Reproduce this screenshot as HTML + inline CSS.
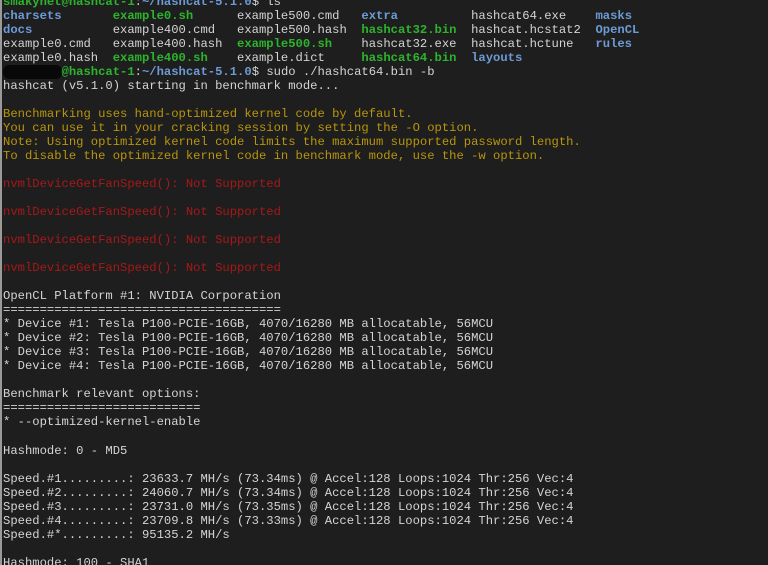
<!DOCTYPE html>
<html><head><meta charset="utf-8"><style>
html,body{margin:0;padding:0;background:#1e1e1e;width:768px;height:565px;overflow:hidden}
body{border-left:2px solid #9a9a9a;box-sizing:border-box;position:relative}
pre{position:absolute;left:1px;top:-5.5px;margin:0;font-family:"Liberation Mono",monospace;font-size:12.2px;line-height:14.03px;color:#d4d4d4;white-space:pre}
.b{color:#6d9bd6;font-weight:bold}.g{color:#2cb52c;font-weight:bold}.y{color:#b8950c}.r{color:#a81818}
.k{color:#050505;background:#080808;border-radius:6px}
</style></head><body><pre><span class="g">smakynet@hashcat-1</span>:<span class="b">~/hashcat-5.1.0</span>$ ls
<span class="b">charsets</span>       <span class="g">example0.sh</span>      example500.cmd   <span class="b">extra</span>          hashcat64.exe    <span class="b">masks</span>
<span class="b">docs</span>           example400.cmd   example500.hash  <span class="g">hashcat32.bin</span>  hashcat.hcstat2  <span class="b">OpenCL</span>
example0.cmd   example400.hash  <span class="g">example500.sh</span>    hashcat32.exe  hashcat.hctune   <span class="b">rules</span>
example0.hash  <span class="g">example400.sh</span>    example.dict     <span class="g">hashcat64.bin</span>  <span class="b">layouts</span>
<span class="k">        </span><span class="g">@hashcat-1</span>:<span class="b">~/hashcat-5.1.0</span>$ sudo ./hashcat64.bin -b
hashcat (v5.1.0) starting in benchmark mode...

<span class="y">Benchmarking uses hand-optimized kernel code by default.
You can use it in your cracking session by setting the -O option.
Note: Using optimized kernel code limits the maximum supported password length.
To disable the optimized kernel code in benchmark mode, use the -w option.</span>

<span class="r">nvmlDeviceGetFanSpeed(): Not Supported</span>

<span class="r">nvmlDeviceGetFanSpeed(): Not Supported</span>

<span class="r">nvmlDeviceGetFanSpeed(): Not Supported</span>

<span class="r">nvmlDeviceGetFanSpeed(): Not Supported</span>

OpenCL Platform #1: NVIDIA Corporation
======================================
* Device #1: Tesla P100-PCIE-16GB, 4070/16280 MB allocatable, 56MCU
* Device #2: Tesla P100-PCIE-16GB, 4070/16280 MB allocatable, 56MCU
* Device #3: Tesla P100-PCIE-16GB, 4070/16280 MB allocatable, 56MCU
* Device #4: Tesla P100-PCIE-16GB, 4070/16280 MB allocatable, 56MCU

Benchmark relevant options:
===========================
* --optimized-kernel-enable

Hashmode: 0 - MD5

Speed.#1.........: 23633.7 MH/s (73.34ms) @ Accel:128 Loops:1024 Thr:256 Vec:4
Speed.#2.........: 24060.7 MH/s (73.34ms) @ Accel:128 Loops:1024 Thr:256 Vec:4
Speed.#3.........: 23731.0 MH/s (73.35ms) @ Accel:128 Loops:1024 Thr:256 Vec:4
Speed.#4.........: 23709.8 MH/s (73.33ms) @ Accel:128 Loops:1024 Thr:256 Vec:4
Speed.#*.........: 95135.2 MH/s

Hashmode: 100 - SHA1
</pre></body></html>
